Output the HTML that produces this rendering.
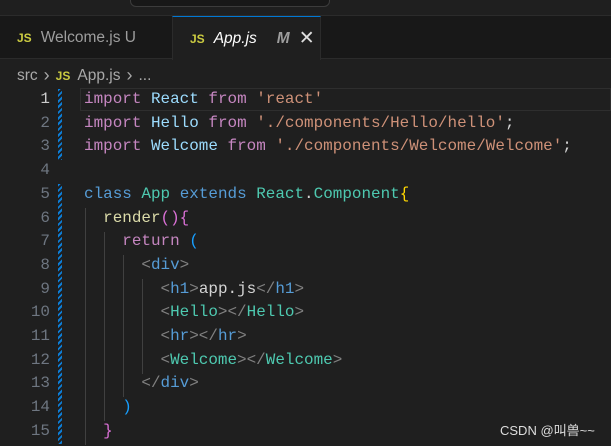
<!DOCTYPE html>
<html><head><style>
*{margin:0;padding:0;box-sizing:border-box}
body{width:611px;height:446px;background:#1f1f1f;overflow:hidden;position:relative;font-family:"Liberation Sans",sans-serif}
.title{position:absolute;left:0;top:0;width:611px;height:16px;background:#1f1f1f;border-bottom:1px solid #2b2b2b}
.search{position:absolute;left:130px;top:-8px;width:200px;height:15px;border:1px solid #3c3c3c;border-radius:6px;background:#181818}
.tabs{position:absolute;left:0;top:16px;width:611px;height:43px;background:#181818;border-bottom:1px solid #2b2b2b}
.tab{position:absolute;top:0;height:43px;font-size:15.5px;color:#9d9d9d;display:flex;align-items:center}
.js{color:#cbcb41;font-weight:bold;font-size:12px;margin-right:9px}
.act{left:172px;width:149px;background:#1f1f1f;border-top:1px solid #0078d4;border-left:1px solid #2b2b2b;border-right:1px solid #2b2b2b;height:44px;color:#fff;padding-left:17px}
.crumb{position:absolute;left:17px;top:65px;font-size:15.5px;color:#a9a9a9;display:flex;align-items:center}
.code{position:absolute;left:0;top:88px;font-family:"Liberation Mono",monospace;font-size:15.95px}
.ln{position:absolute;left:0;width:50px;text-align:right;color:#6e7681;height:23.7px;line-height:23.7px}
.l{position:absolute;left:84px;white-space:pre;height:23.7px;line-height:23.7px;color:#d4d4d4}
.gut{position:absolute;left:58px;width:4px;background:repeating-linear-gradient(135deg,#0c7dd6 0 2px,transparent 2px 4px)}
.g{position:absolute;width:1px;background:#404040}
.k{color:#c586c0}.v{color:#9cdcfe}.s{color:#ce9178}.b{color:#569cd6}.t{color:#4ec9b0}.f{color:#dcdcaa}.p{color:#da70d6}.y{color:#ffd700}.c{color:#179fff}.a{color:#808080}
</style></head><body>
<div class="title"><div class="search"></div></div>
<div class="tabs">
<div class="tab" style="left:17px"><span class="js">JS</span>Welcome.js&nbsp;U</div>
<div class="tab act"><span class="js">JS</span><i>App.js</i><span style="margin-left:20px;color:#9d9d9d;font-weight:bold;font-style:italic">M</span><span style="margin-left:9px;font-size:19px;color:#ddd">✕</span></div>
</div>
<div class="crumb">src<span style="margin:0 6px;font-size:18px">›</span><span class="js" style="margin-right:7px">JS</span>App.js<span style="margin:0 6px;font-size:18px">›</span>...</div>
<div style="position:absolute;left:80px;top:88px;width:531px;height:23px;border:1px solid #2e2e2e"></div>
<div class="gut" style="top:89px;height:71px"></div>
<div class="gut" style="top:184px;height:260px"></div>
<div class="g" style="left:85px;top:208px;height:237px"></div>
<div class="g" style="left:104px;top:232px;height:189px"></div>
<div class="g" style="left:123px;top:255px;height:142px"></div>
<div class="g" style="left:142px;top:279px;height:95px"></div>
<div class="code">
<div class="ln" style="top:0;color:#ccc">1</div><div class="ln" style="top:23.7px">2</div><div class="ln" style="top:47.4px">3</div><div class="ln" style="top:71.1px">4</div><div class="ln" style="top:94.8px">5</div><div class="ln" style="top:118.5px">6</div><div class="ln" style="top:142.2px">7</div><div class="ln" style="top:165.9px">8</div><div class="ln" style="top:189.6px">9</div><div class="ln" style="top:213.3px">10</div><div class="ln" style="top:237px">11</div><div class="ln" style="top:260.7px">12</div><div class="ln" style="top:284.4px">13</div><div class="ln" style="top:308.1px">14</div><div class="ln" style="top:331.8px">15</div>
<div class="l" style="top:0"><span class="k">import</span> <span class="v">React</span> <span class="k">from</span> <span class="s">'react'</span></div>
<div class="l" style="top:23.7px"><span class="k">import</span> <span class="v">Hello</span> <span class="k">from</span> <span class="s">'./components/Hello/hello'</span>;</div>
<div class="l" style="top:47.4px"><span class="k">import</span> <span class="v">Welcome</span> <span class="k">from</span> <span class="s">'./components/Welcome/Welcome'</span>;</div>
<div class="l" style="top:94.8px"><span class="b">class</span> <span class="t">App</span> <span class="b">extends</span> <span class="t">React</span>.<span class="t">Component</span><span class="y">{</span></div>
<div class="l" style="top:118.5px">  <span class="f">render</span><span class="p">()</span><span class="p">{</span></div>
<div class="l" style="top:142.2px">    <span class="k">return</span> <span class="c">(</span></div>
<div class="l" style="top:165.9px">      <span class="a">&lt;</span><span class="b">div</span><span class="a">&gt;</span></div>
<div class="l" style="top:189.6px">        <span class="a">&lt;</span><span class="b">h1</span><span class="a">&gt;</span>app.js<span class="a">&lt;/</span><span class="b">h1</span><span class="a">&gt;</span></div>
<div class="l" style="top:213.3px">        <span class="a">&lt;</span><span class="t">Hello</span><span class="a">&gt;&lt;/</span><span class="t">Hello</span><span class="a">&gt;</span></div>
<div class="l" style="top:237px">        <span class="a">&lt;</span><span class="b">hr</span><span class="a">&gt;&lt;/</span><span class="b">hr</span><span class="a">&gt;</span></div>
<div class="l" style="top:260.7px">        <span class="a">&lt;</span><span class="t">Welcome</span><span class="a">&gt;&lt;/</span><span class="t">Welcome</span><span class="a">&gt;</span></div>
<div class="l" style="top:284.4px">      <span class="a">&lt;/</span><span class="b">div</span><span class="a">&gt;</span></div>
<div class="l" style="top:308.1px">    <span class="c">)</span></div>
<div class="l" style="top:331.8px">  <span class="p">}</span></div>
</div>
<div style="position:absolute;left:500px;top:420px;font-size:13px;color:#ddd;font-family:'Liberation Sans','Noto Sans CJK SC',sans-serif">CSDN @叫兽~~</div>
</body></html>
